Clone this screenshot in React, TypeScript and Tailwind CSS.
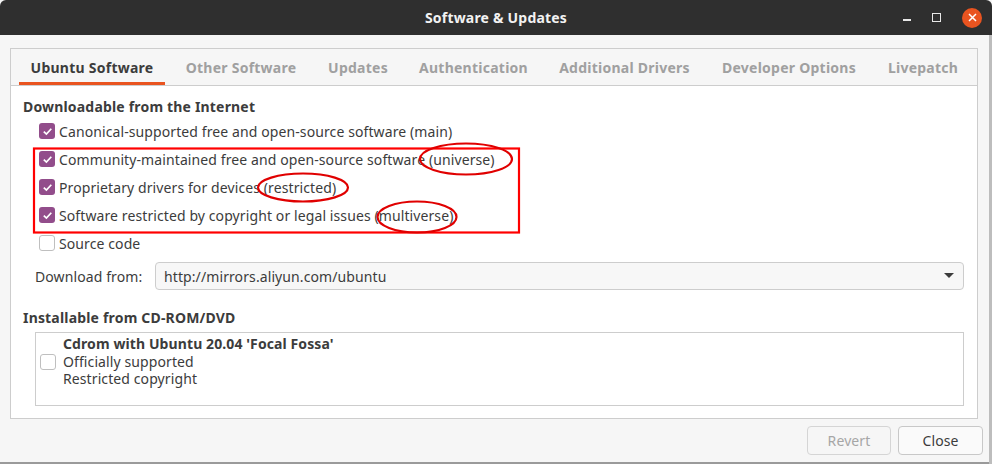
import React from 'react';

const font = { fontFamily: '"Noto Sans", "Liberation Sans", sans-serif' };

const tabs = [
  { label: 'Ubuntu Software', w: 'w-[146px]' },
  { label: 'Other Software', w: 'w-[136px]' },
  { label: 'Updates', w: 'w-[82px]' },
  { label: 'Authentication', w: 'w-[133px]' },
  { label: 'Additional Drivers', w: 'w-[153px]' },
  { label: 'Developer Options', w: 'w-[160px]' },
  { label: 'Livepatch', w: 'w-[92px]' },
];

const sources = [
  { label: 'Canonical-supported free and open-source software (main)', checked: true },
  { label: 'Community-maintained free and open-source software (universe)', checked: true },
  { label: 'Proprietary drivers for devices (restricted)', checked: true },
  { label: 'Software restricted by copyright or legal issues (multiverse)', checked: true },
  { label: 'Source code', checked: false },
];

const Check: React.FC<{ checked: boolean }> = ({ checked }) =>
  checked ? (
    <span className="flex h-[16px] w-[16px] shrink-0 items-center justify-center rounded-[3px] bg-[#924d8b]">
      <svg width="11" height="11" viewBox="0 0 11 11">
        <path d="M1.8 5.6 L4.4 8.1 L9.3 2.7" fill="none" stroke="white" strokeWidth="1.7" />
      </svg>
    </span>
  ) : (
    <span className="block h-[16px] w-[16px] shrink-0 rounded-[3px] border border-[#bfbfbf] bg-white" />
  );

const App: React.FC = () => {
  return (
    <div
      className="relative h-[464px] w-[992px] overflow-hidden bg-[#f6f6f6] text-[14px] tracking-[0.1px] text-[#3c3c3c]"
      style={font}
    >
      {/* title bar */}
      <div className="relative flex h-[35px] items-center justify-center rounded-t-[6px] bg-[#2f2f2f]">
        <span className="text-[14px] font-bold tracking-[0.2px] text-[#f2f2f2]">Software &amp; Updates</span>
        <div className="absolute right-[10px] top-0 flex h-[35px] items-center gap-[21px]">
          <span className="mt-[5px] block h-[1.5px] w-[8px] bg-[#e8e8e8]" />
          <span className="block h-[9px] w-[9px] border border-[#e8e8e8]" />
          <span className="flex h-[20px] w-[20px] items-center justify-center rounded-full bg-[#e95420]">
            <svg width="9" height="9" viewBox="0 0 9 9">
              <path d="M1 1 L8 8 M8 1 L1 8" stroke="white" strokeWidth="1.5" />
            </svg>
          </span>
        </div>
      </div>

      {/* notebook frame */}
      <div className="ml-[10px] mt-[13px] flex h-[371px] w-[968px] flex-col border border-[#cdcdcd]">
        <div className="flex h-[37px] items-stretch gap-[8px] border-b border-[#cdcdcd] bg-[#f6f6f6] pl-[8px]">
          {tabs.map((t, i) => (
            <div
              key={t.label}
              className={
                i === 0
                  ? `flex ${t.w} items-center justify-center border-b-[3px] border-[#e95420] pt-[3px] font-bold tracking-[0.25px] text-[#3c3c3c]`
                  : `flex ${t.w} items-center justify-center border-b-[3px] border-transparent pt-[3px] font-bold tracking-[0.25px] text-[#a0a0a0]`
              }
            >
              {t.label}
            </div>
          ))}
        </div>

        <div className="flex-1 bg-white pl-[12px] pr-[13px] pt-[11px]">
          <div className="h-[20px] font-bold leading-[20px] tracking-[0.18px]">Downloadable from the Internet</div>
          <div className="pl-[16px]">
            {sources.map((s) => (
              <div key={s.label} className="flex h-[28px] items-center gap-[4px]">
                <Check checked={s.checked} />
                <span>{s.label}</span>
              </div>
            ))}
          </div>

          <div className="mt-[5px] flex items-center pl-[12px]">
            <span className="w-[120px]">Download from:</span>
            <div className="flex h-[28px] flex-1 items-center justify-between rounded-[4px] border border-[#cdcdcd] bg-[#f7f7f7] pl-[8px] pr-[9px]">
              <span>http://mirrors.aliyun.com/ubuntu</span>
              <svg width="10" height="6" viewBox="0 0 10 6">
                <path d="M0 0 L10 0 L5 5 Z" fill="#3c3c3c" />
              </svg>
            </div>
          </div>

          <div className="mt-[18px] h-[20px] font-bold leading-[20px] tracking-[0.18px]">Installable from CD-ROM/DVD</div>
          <div className="ml-[12px] mt-[4px] flex h-[74px] items-start border border-[#cdcdcd] bg-white">
            <div className="ml-[4px] mt-[21px]">
              <Check checked={false} />
            </div>
            <div className="ml-[7px] mt-[2px] leading-[17.5px]">
              <div className="font-bold">Cdrom with Ubuntu 20.04 'Focal Fossa'</div>
              <div>Officially supported</div>
              <div>Restricted copyright</div>
            </div>
          </div>
        </div>
      </div>

      {/* dialog buttons */}
      <div className="mr-[9px] mt-[7px] flex justify-end gap-[7px]">
        <button className="h-[29px] w-[84px] rounded-[4px] border border-[#d5d5d5] bg-[#f6f6f6] text-[#a6a6a6]">
          Revert
        </button>
        <button className="h-[29px] w-[85px] rounded-[4px] border border-[#c8c8c8] bg-[#fafafa] text-[#3c3c3c]">
          Close
        </button>
      </div>

      {/* window edges */}
      <div className="absolute bottom-0 left-0 h-[2px] w-full bg-[#9a9a9a]" />
      <div className="absolute right-0 top-[35px] h-full w-[3px] bg-[#bdbdbd]" />

      {/* red annotations drawn over the screenshot */}
      <svg className="pointer-events-none absolute left-0 top-0" width="992" height="464">
        <rect x="34" y="148.5" width="485" height="84" fill="none" stroke="#ff0000" strokeWidth="2.2" />
        <ellipse cx="466" cy="159" rx="46" ry="15.5" fill="none" stroke="#e00000" strokeWidth="2.2" />
        <ellipse cx="303" cy="187.5" rx="45" ry="14" fill="none" stroke="#e00000" strokeWidth="2.2" />
        <ellipse cx="417" cy="217" rx="39.5" ry="15.5" fill="none" stroke="#e00000" strokeWidth="2.2" />
      </svg>
    </div>
  );
};

export default App;
